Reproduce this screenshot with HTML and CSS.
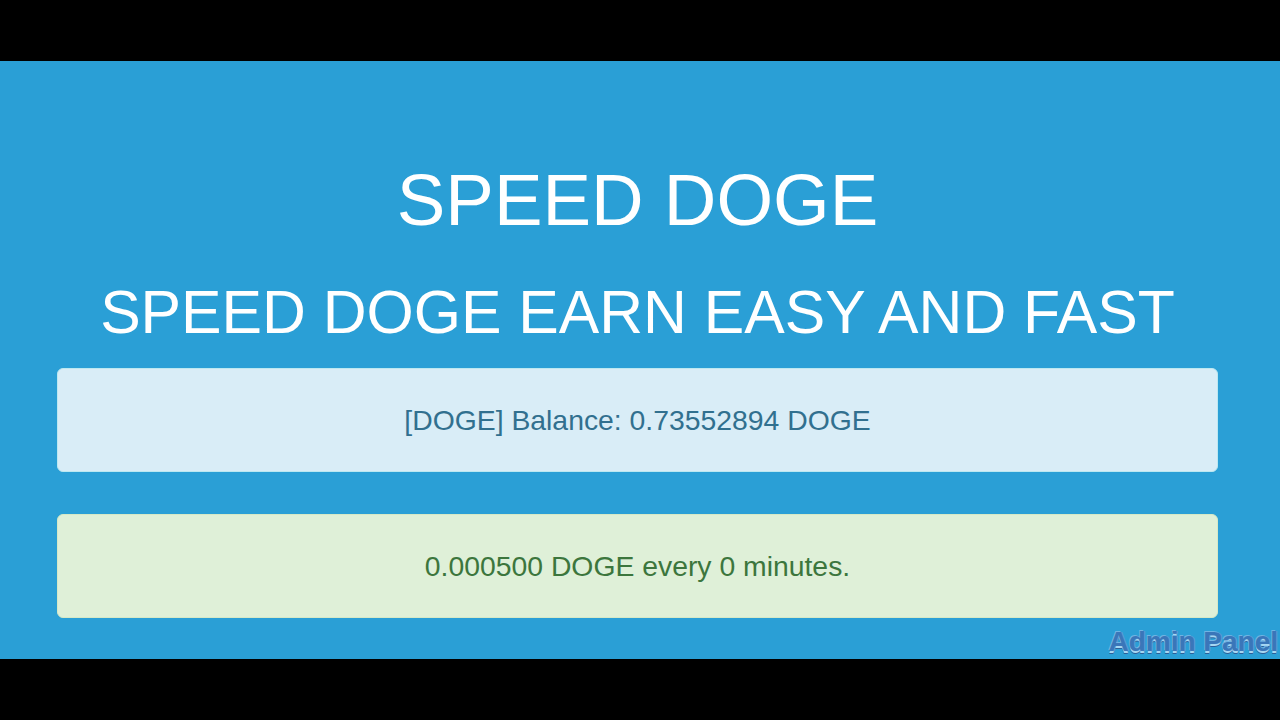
FILE: index.html
```html
<!DOCTYPE html>
<html>
<head>
<meta charset="utf-8">
<title>SPEED DOGE</title>
<link rel="stylesheet" href="styles.css">
</head>
<body>
<div class="bar"></div>
<main class="stage">
  <h1 class="title">SPEED DOGE</h1>
  <h2 class="subtitle">SPEED DOGE EARN EASY AND FAST</h2>
  <div class="alert alert-info">[DOGE] Balance: 0.73552894 DOGE</div>
  <div class="alert alert-success">0.000500 DOGE every 0 minutes.</div>
  <div class="admin">Admin Panel</div>
</main>
<div class="bar"></div>
</body>
</html>
```

FILE: styles.css
```css
html, body {
  margin: 0;
  padding: 0;
  background: #000;
  font-family: "Liberation Sans", Arial, sans-serif;
  overflow: hidden;
}
.bar {
  height: 61px;
  background: #000;
}
.stage {
  height: 598px;
  background: #2a9fd6;
  box-sizing: border-box;
  padding: 102px 0 0 0;
  display: flex;
  flex-direction: column;
  overflow: hidden;
}
.title {
  margin: 0;
  padding-right: 5px;
  font-size: 72.8px;
  line-height: 73px;
  font-weight: normal;
  color: #fff;
  text-align: center;
}
.subtitle {
  margin: 46px 0 0 0;
  padding-right: 5px;
  font-size: 60.7px;
  line-height: 61px;
  font-weight: normal;
  color: #fff;
  text-align: center;
}
.alert {
  margin: 25px 0 0 57px;
  width: 1161px;
  height: 104px;
  box-sizing: border-box;
  border: 1px solid;
  border-radius: 6px;
  display: flex;
  align-items: center;
  justify-content: center;
  font-size: 28.35px;
}
.alert-info {
  background: #d9edf7;
  border-color: #bce8f1;
  color: #31708f;
}
.alert-success {
  margin-top: 42px;
  background: #dff0d8;
  border-color: #d6e9c6;
  color: #3c763d;
}
.admin {
  margin-top: 8px;
  text-align: right;
  padding-right: 2px;
  font-size: 28px;
  line-height: 32px;
  font-weight: bold;
  color: #3a76b9;
  text-shadow: -1px -1px 0 #6fb3e3, 1px 0 0 #5a9ad0, 0 2px 0 #a6d6f2, 0 3px 0 #2c5f99;
}
```
